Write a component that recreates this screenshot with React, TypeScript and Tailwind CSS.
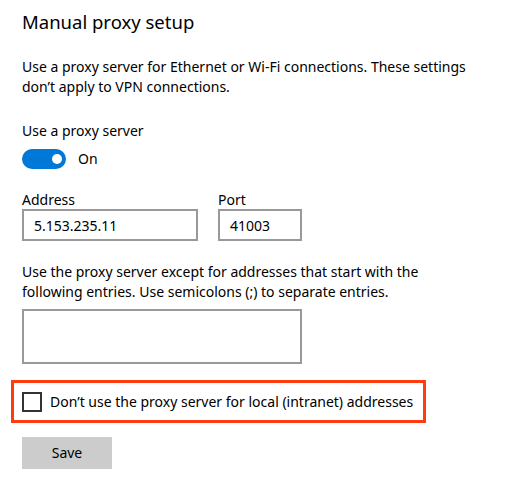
import React from "react";

export default function App() {
  return (
    <div
      className="w-[506px] h-[479px] bg-white text-black pt-[8px] pl-[11px]"
      style={{ fontFamily: '"Noto Sans", "Open Sans", sans-serif' }}
    >
      <div className="pl-[11px]">
        {/* Title */}
        <h1 className="text-[18.5px] leading-[28px] font-normal">Manual proxy setup</h1>

        <p className="mt-[21px] text-[14px] leading-[20px] w-[460px]">
          Use a proxy server for Ethernet or Wi-Fi connections. These settings
          don’t apply to VPN connections.
        </p>

        {/* Toggle */}
        <div className="mt-[24px] text-[14px] leading-[20px]">Use a proxy server</div>
        <div className="mt-[8px] flex items-center">
          <div className="w-[44px] h-[20px] rounded-full bg-[#0078d7] flex items-center justify-end pr-[4px]">
            <div className="w-[10px] h-[10px] rounded-full bg-white" />
          </div>
          <span className="ml-[12px] text-[14px] leading-[20px]">On</span>
        </div>

        {/* Address / Port */}
        <div className="mt-[22px] flex gap-[20px]">
          <div className="flex flex-col">
            <label className="text-[14px] leading-[18px]">Address</label>
            <div className="w-[176px] h-[32px] border-2 border-[#999999] flex items-center pl-[10px] text-[14px]">
              5.153.235.11
            </div>
          </div>
          <div className="flex flex-col">
            <label className="text-[14px] leading-[18px]">Port</label>
            <div className="w-[84px] h-[32px] border-2 border-[#999999] flex items-center pl-[10px] text-[14px]">
              41003
            </div>
          </div>
        </div>

        <p className="mt-[21px] text-[14px] leading-[20px] w-[460px]">
          Use the proxy server except for addresses that start with the
          <br />
          following entries. Use semicolons (;) to separate entries.
        </p>
        <div className="mt-[7px] w-[280px] h-[55px] border-2 border-[#999999]" />
      </div>

      {/* Highlighted checkbox row */}
      <div className="mt-[16px] w-[415px] h-[43px] border-[3px] border-[#ff3c0f] flex items-center pl-[8px]">
        <div className="w-[20px] h-[20px] border-2 border-[#333333] shrink-0" />
        <span className="ml-[8px] text-[14px] leading-[20px] whitespace-nowrap">
          Don’t use the proxy server for local (intranet) addresses
        </span>
      </div>

      <div className="pl-[11px]">
        <button className="mt-[14px] w-[90px] h-[32px] bg-[#cccccc] text-[14px] leading-[20px]">
          Save
        </button>
      </div>
    </div>
  );
}
